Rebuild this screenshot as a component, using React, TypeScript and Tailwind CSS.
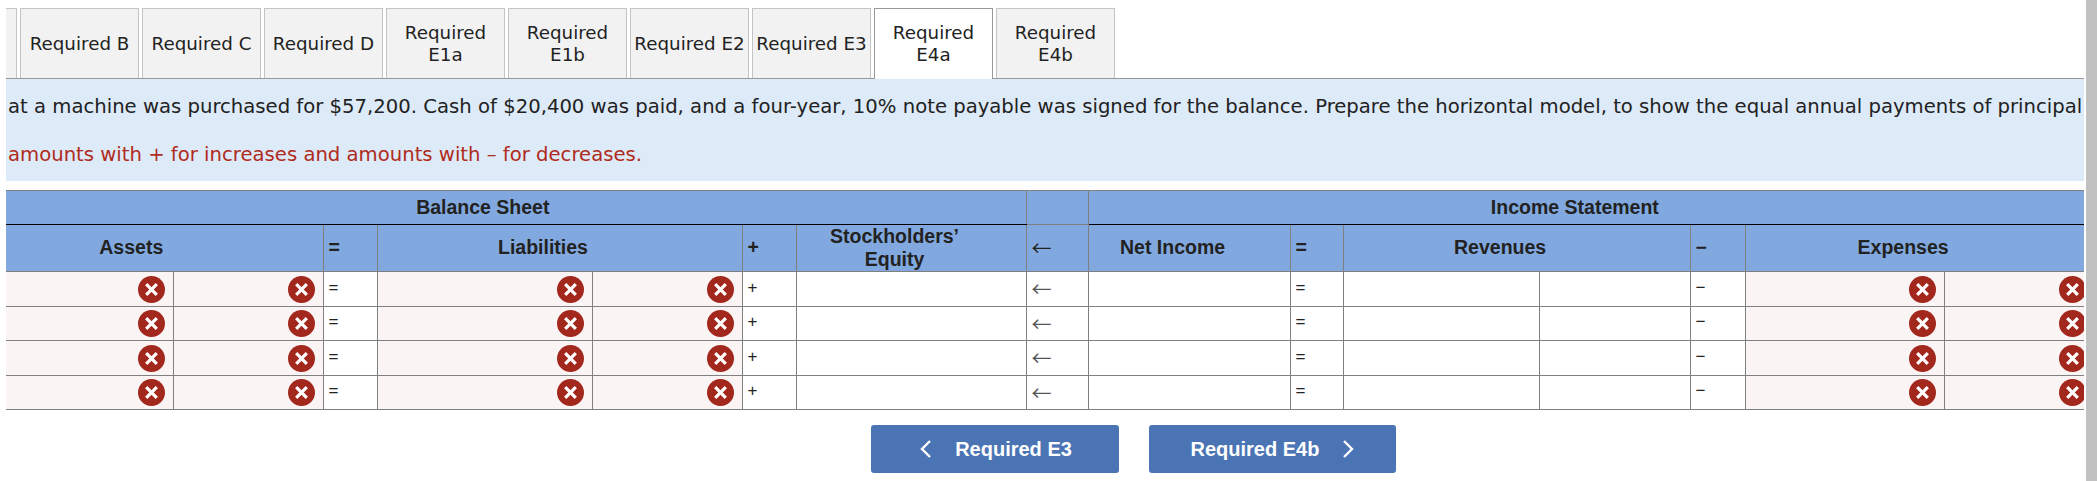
const tabs = [
  ['Required B'],
  ['Required C'],
  ['Required D'],
  ['Required', 'E1a'],
  ['Required', 'E1b'],
  ['Required E2'],
  ['Required E3'],
  ['Required', 'E4a'],
  ['Required', 'E4b'],
];

const rows = [0, 1, 2, 3];
const rowHeights = ['h-[35px]', 'h-[34px]', 'h-[35px]', 'h-[34px]'];

function WrongMark() {
  return (
    <svg viewBox="0 0 27 27" className="ml-auto block h-[27px] w-[27px]">
      <circle cx="13.5" cy="13.5" r="13.5" fill="#a2271c" />
      <path d="M8.2 8.2l10.6 10.6M18.8 8.2L8.2 18.8" stroke="#fff" strokeWidth="3.2" strokeLinecap="butt" />
    </svg>
  );
}

function AnswerCell({ first }: { first?: boolean }) {
  return (
    <td className={first ? 'border border-l-0 border-[#808080] bg-[#fbf4f4] pr-[8px] align-middle' : 'border border-[#808080] bg-[#fbf4f4] pr-[8px] align-middle'}>
      <WrongMark />
    </td>
  );
}

function PlainCell() {
  return <td className="border border-[#808080] bg-white" />;
}

function OpCell({ op }: { op: string }) {
  return <td className="border border-[#808080] bg-white px-[5px] pb-[3px] text-left text-[17px] text-[#222]">{op}</td>;
}

function Chevron({ dir }: { dir: 'left' | 'right' }) {
  return (
    <svg viewBox="0 0 11 18" className="h-[18px] w-[11px]" fill="none" stroke="#fff" strokeWidth="2.4">
      <path d={dir === 'left' ? 'M10 1L2 9l8 8' : 'M1 1l8 8-8 8'} />
    </svg>
  );
}

export default function App() {
  return (
    <div className="flex h-[481px] w-[2097px] overflow-hidden bg-white font-['Liberation_Sans',sans-serif]">
      <div className="ml-[6px] w-[2078px] overflow-hidden pt-[8px]">
        {/* Tabs */}
        <div className="flex h-[70px] gap-[3px] font-['DejaVu_Sans',sans-serif] text-[18.3px] leading-[22px] text-[#222]">
          <div className="w-[11px] border-t border-r border-[#c4c4c4] bg-[#f2f2f2]" />
          {tabs.map((lines) => {
            const active = lines[1] === 'E4a';
            return (
              <div
                key={lines.join(' ')}
                className={
                  active
                    ? 'relative z-10 -mb-px flex h-[71px] w-[119px] flex-col items-center justify-center border border-b-0 border-[#999] bg-white'
                    : 'flex h-[70px] w-[119px] flex-col items-center justify-center border border-b-0 border-[#c4c4c4] bg-[#f2f2f2]'
                }
              >
                {lines.map((l) => (
                  <span key={l} className="whitespace-nowrap">{l}</span>
                ))}
              </div>
            );
          })}
        </div>

        {/* Instructions */}
        <div className="h-[103px] overflow-hidden border-t border-[#999] bg-[#ddeaf8] pt-[4px] pl-[2px] font-['DejaVu_Sans',sans-serif] text-[19.65px] leading-[48px] whitespace-nowrap">
          <p className="text-[#222]">
            at a machine was purchased for $57,200. Cash of $20,400 was paid, and a four-year, 10% note payable was signed for the balance. Prepare the horizontal model, to show the equal annual payments of principal
          </p>
          <p className="text-[#b02a20]">amounts with + for increases and amounts with – for decreases.</p>
        </div>

        {/* Horizontal model */}
        <div className="mt-[9px] overflow-hidden">
          <table className="w-[2088px] table-fixed border-collapse">
            <colgroup>
              <col className="w-[167px]" />
              <col className="w-[150px]" />
              <col className="w-[54px]" />
              <col className="w-[215px]" />
              <col className="w-[150px]" />
              <col className="w-[54px]" />
              <col className="w-[230px]" />
              <col className="w-[62px]" />
              <col className="w-[202px]" />
              <col className="w-[53px]" />
              <col className="w-[196px]" />
              <col className="w-[151px]" />
              <col className="w-[55px]" />
              <col className="w-[199px]" />
              <col className="w-[150px]" />
            </colgroup>
            <thead className="bg-[#81a9df] text-[19.5px] font-bold text-[#222]">
              <tr className="h-[34px]">
                <th colSpan={7} className="border-t border-r border-t-[#808080] border-r-[#808080] border-b border-b-black pr-[66px] text-center">Balance Sheet</th>
                <th className="border border-[#808080]" />
                <th colSpan={7} className="border-t border-l border-t-[#808080] border-l-[#808080] border-b border-b-black pr-[33px] text-center">Income Statement</th>
              </tr>
              <tr className="h-[47px]">
                <th colSpan={2} className="border border-l-0 border-[#808080] border-t-black pr-[66px] text-center">Assets</th>
                <th className="border border-[#808080] border-t-black px-[5px] text-left">=</th>
                <th colSpan={2} className="border border-[#808080] border-t-black pr-[33px] text-center">Liabilities</th>
                <th className="border border-[#808080] border-t-black px-[5px] text-left">+</th>
                <th className="border border-[#808080] border-t-black pr-[33px] text-center leading-[23px]">Stockholders’<br />Equity</th>
                <th className="border border-[#808080] px-[5px] text-left font-['Noto_Sans_CJK_JP',sans-serif] text-[20px] font-normal leading-none">←</th>
                <th className="border border-[#808080] border-t-black pr-[33px] text-center">Net Income</th>
                <th className="border border-[#808080] border-t-black px-[5px] text-left">=</th>
                <th colSpan={2} className="border border-[#808080] border-t-black pr-[33px] text-center">Revenues</th>
                <th className="border border-[#808080] border-t-black px-[5px] text-left">−</th>
                <th colSpan={2} className="border border-[#808080] border-t-black pr-[33px] text-center">Expenses</th>
              </tr>
            </thead>
            <tbody>
              {rows.map((r) => (
                <tr key={r} className={rowHeights[r]}>
                  <AnswerCell first />
                  <AnswerCell />
                  <OpCell op="=" />
                  <AnswerCell />
                  <AnswerCell />
                  <OpCell op="+" />
                  <PlainCell />
                  <td className="border border-[#808080] bg-white px-[5px] text-left font-['Noto_Sans_CJK_JP',sans-serif] text-[20px] leading-none text-[#555]">←</td>
                  <PlainCell />
                  <OpCell op="=" />
                  <PlainCell />
                  <PlainCell />
                  <OpCell op="−" />
                  <AnswerCell />
                  <AnswerCell />
                </tr>
              ))}
            </tbody>
          </table>
        </div>

        {/* Prev / next */}
        <div className="mt-[15px] ml-[865px] flex gap-[30px] text-[20px] font-bold text-white">
          <button className="flex h-[48px] w-[248px] items-center justify-center gap-[24px] rounded-[3px] bg-[#4a74b4] pl-[2px]">
            <Chevron dir="left" />
            Required E3
          </button>
          <button className="flex h-[48px] w-[247px] items-center justify-center gap-[24px] rounded-[3px] bg-[#4a74b4]">
            Required E4b
            <Chevron dir="right" />
          </button>
        </div>
      </div>

      {/* Scrollbar */}
      <div className="ml-[2px] w-[11px] bg-[#c1c1c1]" />
    </div>
  );
}
